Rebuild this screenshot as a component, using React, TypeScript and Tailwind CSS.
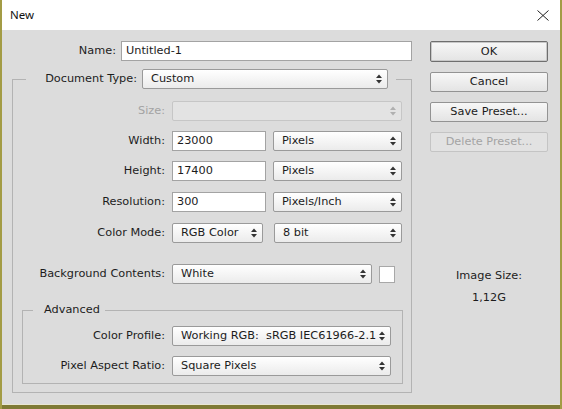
import React from "react";

function Arrows({ disabled }: { disabled?: boolean }) {
  return (
    <svg width="6" height="10" viewBox="0 0 6 10" className="shrink-0">
      <polygon points="0,4 3,0.5 6,4" fill={disabled ? "#b0b0b0" : "#333"} />
      <polygon points="0,6 3,9.5 6,6" fill={disabled ? "#b0b0b0" : "#333"} />
    </svg>
  );
}

function Select({ w, value, disabled }: { w: string; value?: string; disabled?: boolean }) {
  return (
    <div
      className={`${w} h-[20px] shrink-0 flex items-center justify-between pl-[8px] pr-[5px] rounded-[2px] border ${
        disabled
          ? "border-[#c6c6c6] bg-[#e3e3e3]"
          : "border-[#9a9a9a] bg-gradient-to-b from-white to-[#ebebeb]"
      }`}
    >
      <span className="whitespace-pre leading-none">{value}</span>
      <Arrows disabled={disabled} />
    </div>
  );
}

function Input({ w, value }: { w: string; value: string }) {
  return (
    <div className={`${w} h-[20px] shrink-0 flex items-center pl-[4px] bg-white border border-[#a3a3a3]`}>
      <span className="leading-none">{value}</span>
    </div>
  );
}

function Row({ label, children, lw, className = "" }: { label: string; children: React.ReactNode; lw: string; className?: string }) {
  return (
    <div className={`flex items-center ${className}`}>
      <div className={`${lw} shrink-0 text-right`}>{label}</div>
      {children}
    </div>
  );
}

function Btn({ label, primary, disabled, className = "" }: { label: string; primary?: boolean; disabled?: boolean; className?: string }) {
  return (
    <button
      type="button"
      className={`w-[118px] h-[20px] flex items-center justify-center rounded-[2px] border leading-none ${
        disabled
          ? "border-[#c4c4c4] bg-[#e2e2e2] text-[#a4a4a4]"
          : primary
          ? "border-[#6e6e6e] shadow-[inset_0_0_0_1px_#c8c8c8] bg-gradient-to-b from-[#f7f7f7] to-[#e4e4e4]"
          : "border-[#939393] bg-gradient-to-b from-[#f7f7f7] to-[#e4e4e4]"
      } ${className}`}
    >
      {label}
    </button>
  );
}

export default function App() {
  return (
    <div className="w-[562px] h-[409px] flex flex-col border-x-2 border-[#a39c45] font-['DejaVu_Sans',sans-serif] text-[11.3px] text-[#1c1c1c]">
      {/* title bar */}
      <div className="h-[30px] shrink-0 bg-white flex items-center justify-between pl-[8px] pr-[11px]">
        <span className="font-['Noto_Sans',sans-serif] text-[11.5px] text-[#111]">New</span>
        <svg width="12" height="11" viewBox="0 0 12 11">
          <path d="M0.5 0.5 L11.5 10.5 M11.5 0.5 L0.5 10.5" stroke="#222" strokeWidth="1" />
        </svg>
      </div>

      {/* body */}
      <div className="flex-1 bg-[#dcdcdc] flex">
        <div className="w-[410px] pl-[10px] pt-[11px]">
          <Row label="Name:" lw="w-[104px]">
            <div className="ml-[5px]">
              <Input w="w-[291px]" value="Untitled-1" />
            </div>
          </Row>

          <fieldset className="mt-[8px] w-[400px] border border-[#b3b3b3] pb-[8px]">
            <legend className="ml-[13px] pr-[8px]">
              <div className="flex items-center">
                <div className="w-[111px] text-right">Document Type:</div>
                <div className="ml-[5px]">
                  <Select w="w-[246px]" value="Custom" />
                </div>
              </div>
            </legend>

            <Row label="Size:" lw="w-[152px] text-[#a3a3a3]" className="mt-[12px]">
              <div className="ml-[7px]">
                <Select w="w-[230px]" disabled />
              </div>
            </Row>
            <Row label="Width:" lw="w-[152px]" className="mt-[10px]">
              <div className="ml-[7px] flex">
                <Input w="w-[94px]" value="23000" />
                <div className="ml-[7px]">
                  <Select w="w-[129px]" value="Pixels" />
                </div>
              </div>
            </Row>
            <Row label="Height:" lw="w-[152px]" className="mt-[10px]">
              <div className="ml-[7px] flex">
                <Input w="w-[94px]" value="17400" />
                <div className="ml-[7px]">
                  <Select w="w-[129px]" value="Pixels" />
                </div>
              </div>
            </Row>
            <Row label="Resolution:" lw="w-[152px]" className="mt-[11px]">
              <div className="ml-[7px] flex">
                <Input w="w-[94px]" value="300" />
                <div className="ml-[7px]">
                  <Select w="w-[129px]" value="Pixels/Inch" />
                </div>
              </div>
            </Row>
            <Row label="Color Mode:" lw="w-[152px]" className="mt-[11px]">
              <div className="ml-[7px] flex">
                <Select w="w-[91px]" value="RGB Color" />
                <div className="ml-[11px]">
                  <Select w="w-[128px]" value="8 bit" />
                </div>
              </div>
            </Row>
            <Row label="Background Contents:" lw="w-[152px]" className="mt-[21px]">
              <div className="ml-[7px] flex items-center">
                <Select w="w-[200px]" value="White" />
                <div className="ml-[7px] w-[16px] h-[17px] bg-white border border-[#a8a8a8]" />
              </div>
            </Row>

            <fieldset className="mt-[19px] ml-[9px] w-[381px] border border-[#b3b3b3] pb-[7px]">
              <legend className="ml-[10px] pl-[11px] pr-[5px] leading-[14px]">Advanced</legend>
              <Row label="Color Profile:" lw="w-[142px]" className="mt-[9px]">
                <div className="ml-[7px]">
                  <Select w="w-[219px]" value="Working RGB:  sRGB IEC61966-2.1" />
                </div>
              </Row>
              <Row label="Pixel Aspect Ratio:" lw="w-[142px]" className="mt-[10px]">
                <div className="ml-[7px]">
                  <Select w="w-[219px]" value="Square Pixels" />
                </div>
              </Row>
            </fieldset>
          </fieldset>
        </div>

        <div className="ml-[18px] w-[118px] pt-[11px] flex flex-col">
          <Btn label="OK" primary className="h-[21px]" />
          <Btn label="Cancel" className="mt-[10px]" />
          <Btn label="Save Preset..." className="mt-[10px]" />
          <Btn label="Delete Preset..." disabled className="mt-[10px]" />
          <div className="mt-[117px] text-center leading-[14px]">Image Size:</div>
          <div className="mt-[8px] text-center leading-[14px]">1,12G</div>
        </div>
      </div>

      {/* bottom frame */}
      <div className="h-[1px] shrink-0 bg-[#e9e7d2]" />
      <div className="h-[4px] shrink-0 bg-[#7f7a35]" />
    </div>
  );
}
